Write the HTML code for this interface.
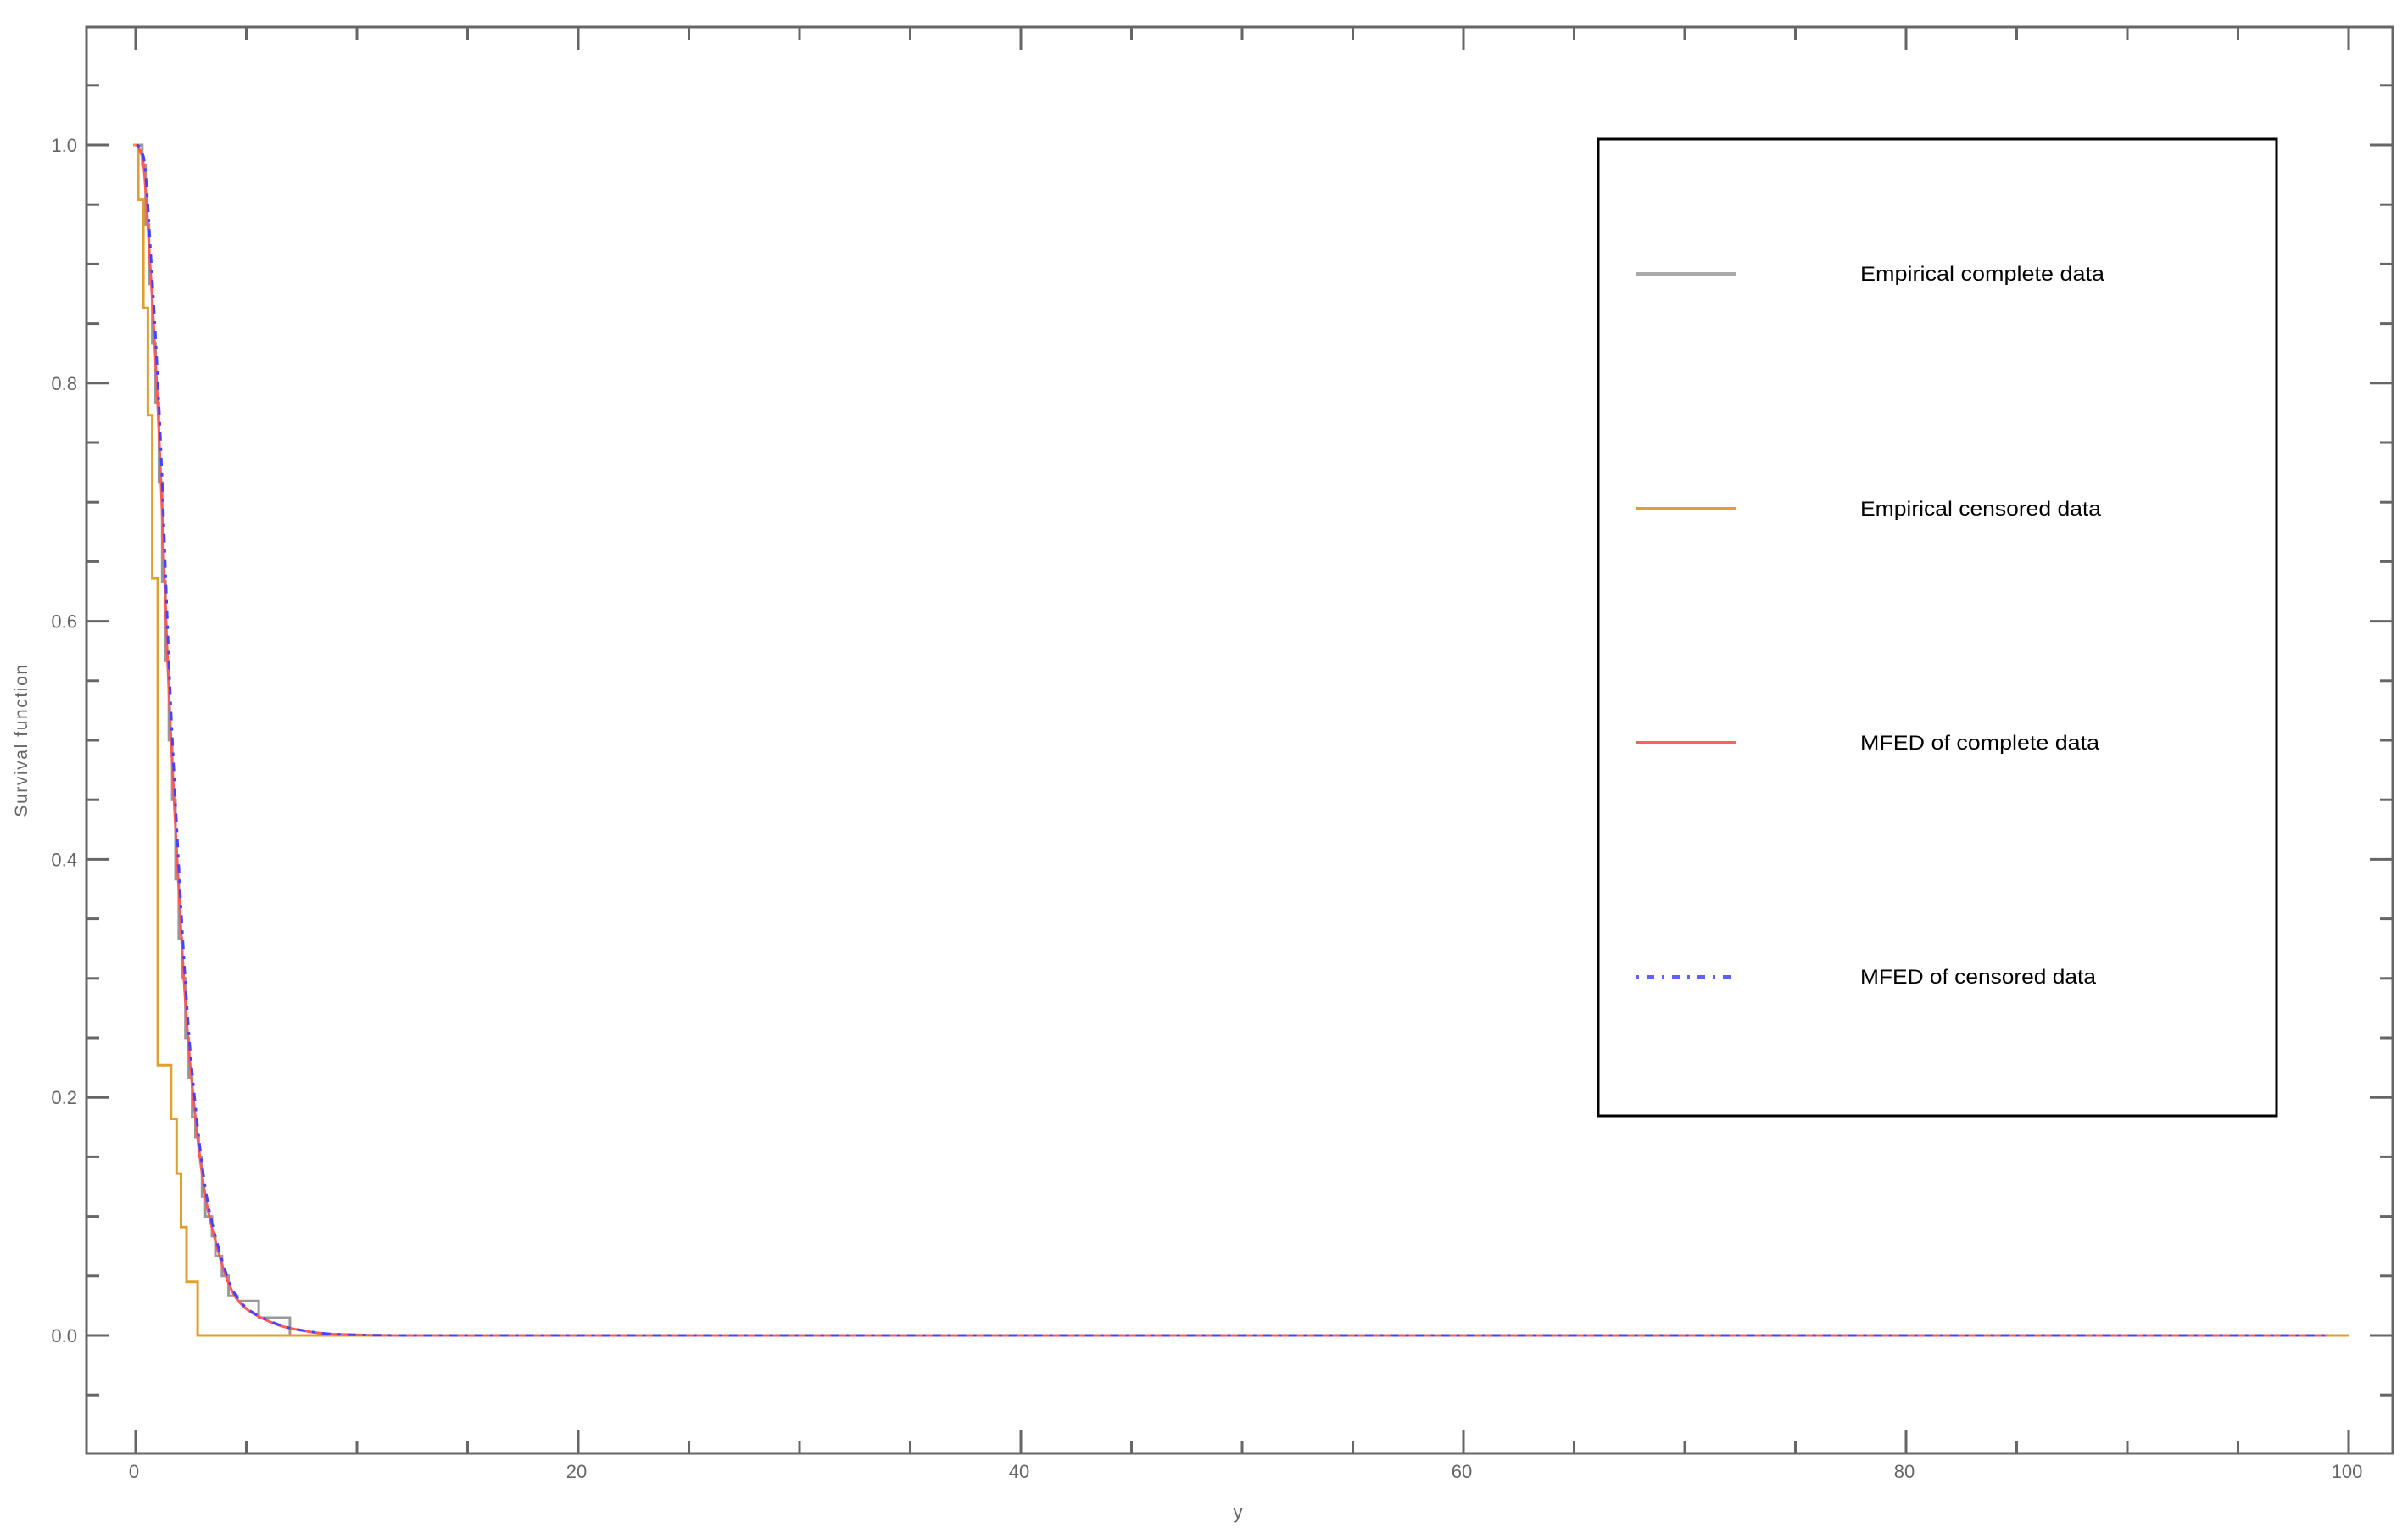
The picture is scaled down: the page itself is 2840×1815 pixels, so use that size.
<!DOCTYPE html>
<html><head><meta charset="utf-8">
<style>
html,body{margin:0;padding:0;background:#fff;}
svg{display:block;}
text{font-family:"Liberation Sans",sans-serif;}
</style></head>
<body>
<svg id="s" width="2840" height="1815" viewBox="0 0 2840 1815" xmlns="http://www.w3.org/2000/svg">
<rect width="2840" height="1815" fill="#fff"/>
<g id="ticks" stroke="#666" stroke-width="3"></g>
<g id="curves" fill="none"></g>
<rect x="102" y="32" width="2720" height="1682" fill="none" stroke="#666" stroke-width="3"/>
<g id="labels" fill="#666" font-size="22"></g>
<text x="0" y="0" font-size="21" fill="#666" letter-spacing="1.6" text-anchor="middle" transform="translate(32,873) rotate(-90)">Survival function</text>
<text x="1460" y="1791" font-size="22" fill="#666" text-anchor="middle">y</text>
<rect x="1885" y="164" width="800" height="1152" fill="#fff" stroke="#000" stroke-width="3"/>
<line x1="1930" y1="323" x2="2047" y2="323" stroke="#aaa" stroke-width="4"/>
<line x1="1930" y1="600" x2="2047" y2="600" stroke="#e0a030" stroke-width="4"/>
<line x1="1930" y1="876" x2="2047" y2="876" stroke="#ff6060" stroke-width="4"/>
<line x1="1930" y1="1152" x2="2047" y2="1152" stroke="#6060ff" stroke-width="4" stroke-dasharray="3,9,9,9"/>
<g font-size="24.5" fill="#000">
<text x="2194" y="331" textLength="288" lengthAdjust="spacingAndGlyphs">Empirical complete data</text>
<text x="2194" y="608" textLength="284" lengthAdjust="spacingAndGlyphs">Empirical censored data</text>
<text x="2194" y="884" textLength="282" lengthAdjust="spacingAndGlyphs">MFED of complete data</text>
<text x="2194" y="1160" textLength="278" lengthAdjust="spacingAndGlyphs">MFED of censored data</text>
</g>
</svg>
<script>
var NS="http://www.w3.org/2000/svg";
function X(t){return 160+t*26.1;}
function Y(s){return 1575-s*1404;}
function el(n,a,p){var e=document.createElementNS(NS,n);for(var k in a)e.setAttribute(k,a[k]);p.appendChild(e);return e;}
var tk=document.getElementById('ticks'),lb=document.getElementById('labels'),cv=document.getElementById('curves');
for(var t=0;t<=100;t+=5){var x=X(t);var L=(t%20==0)?27:15;
 el('line',{x1:x,y1:1714,x2:x,y2:1714-L},tk);el('line',{x1:x,y1:32,x2:x,y2:32+L},tk);
 if(t%20==0){var tx=el('text',{x:x-2,y:1743,'text-anchor':'middle'},lb);tx.textContent=t;}}
for(var i=-2;i<=22;i++){var s=i*0.05;var y=Y(s);if(y<32||y>1714)continue;var L=(i%4==0)?27:15;
 el('line',{x1:102,y1:y,x2:102+L,y2:y},tk);el('line',{x1:2822,y1:y,x2:2822-L,y2:y},tk);
 if(i%4==0&&i>=0){var tx=el('text',{x:91,y:y+8,'text-anchor':'end'},lb);tx.textContent=s.toFixed(1);}}
var P=[[0,1],[0.3,0.99],[0.65,0.9],[1.0,0.78],[1.6,0.5],[2.5,0.22],[3.33,0.1],[4.6,0.03],[5.56,0.016],[7,0.006],[9,0.001],[12,0],[100,0]];
function mono(P){var n=P.length,d=[],m=[];for(var i=0;i<n-1;i++)d.push((P[i+1][1]-P[i][1])/(P[i+1][0]-P[i][0]));
 m[0]=0;for(var i=1;i<n-1;i++){m[i]=(d[i-1]*d[i]<=0)?0:2/(1/d[i-1]+1/d[i]);}m[n-1]=0;
 return function(t){for(var i=0;i<n-1;i++){if(t<=P[i+1][0]){var h=P[i+1][0]-P[i][0],u=(t-P[i][0])/h;
 var h00=2*u*u*u-3*u*u+1,h10=u*u*u-2*u*u+u,h01=-2*u*u*u+3*u*u,h11=u*u*u-u*u;
 return h00*P[i][1]+h10*h*m[i]+h01*P[i+1][1]+h11*h*m[i+1];}}return 0;};}
var f=mono(P);
function smooth(off){var d='';for(var t=0;t<=100;t+=(t<12?0.05:1)){d+=(d?'L':'M')+(X(t)+off).toFixed(1)+','+Y(f(t)).toFixed(1);}return d;}
var g='M'+X(0)+','+Y(1);
for(var t=0.15;t<4.4;t+=0.15){var s=Math.round(f(t+0.1)*60)/60;g+='H'+X(t).toFixed(1)+'V'+Y(s).toFixed(1);}
g+='H'+X(4.6)+'V'+Y(0.029)+'H'+X(5.56)+'V'+Y(0.015)+'H'+X(6.97)+'V'+Y(0)+'H'+X(100);
el('path',{d:g,stroke:'#999','stroke-width':3},cv);
var O=[[0.12,0.954],[0.35,0.863],[0.55,0.773],[0.75,0.636],[1.0,0.227],[1.6,0.182],[1.85,0.136],[2.05,0.091],[2.3,0.045],[2.8,0]];
var o='M'+(X(0)-3)+','+Y(1);O.forEach(function(q){o+='H'+X(q[0]).toFixed(1)+'V'+Y(q[1]).toFixed(1);});o+='H'+X(100);
el('path',{d:o,stroke:'#e0a030','stroke-width':3},cv);
el('path',{d:smooth(0),stroke:'#ff5a5a','stroke-width':3},cv);
el('path',{d:smooth(1.5),stroke:'#4444ff','stroke-width':3,'stroke-dasharray':'4,8,10,8'},cv);
</script>
</body></html>
